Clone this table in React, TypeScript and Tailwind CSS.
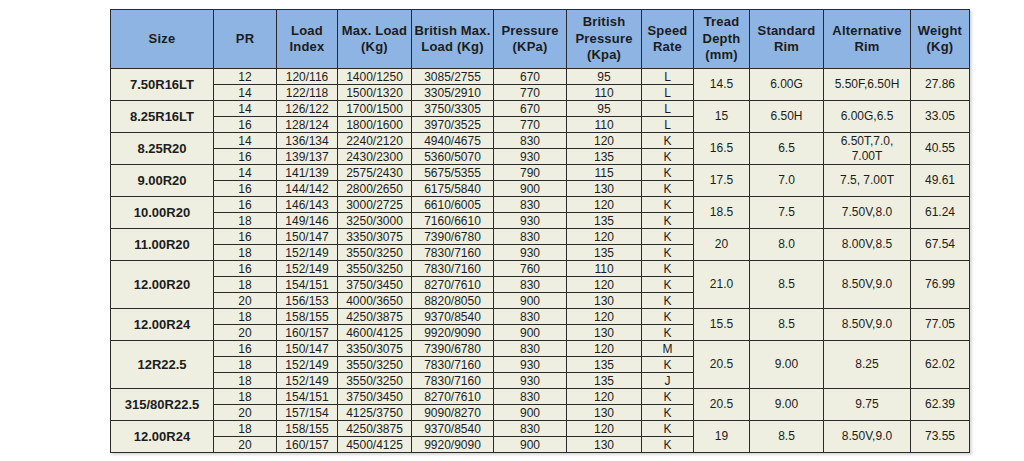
import React from "react";

type Row = [string, string, string, string, string, string, string];
type Group = { size: string; rows: Row[]; tread: string; std: string; alt: string; weight: string };

const groups: Group[] = [
  { size: "7.50R16LT", rows: [["12", "120/116", "1400/1250", "3085/2755", "670", "95", "L"], ["14", "122/118", "1500/1320", "3305/2910", "770", "110", "L"]], tread: "14.5", std: "6.00G", alt: "5.50F,6.50H", weight: "27.86" },
  { size: "8.25R16LT", rows: [["14", "126/122", "1700/1500", "3750/3305", "670", "95", "L"], ["16", "128/124", "1800/1600", "3970/3525", "770", "110", "L"]], tread: "15", std: "6.50H", alt: "6.00G,6.5", weight: "33.05" },
  { size: "8.25R20", rows: [["14", "136/134", "2240/2120", "4940/4675", "830", "120", "K"], ["16", "139/137", "2430/2300", "5360/5070", "930", "135", "K"]], tread: "16.5", std: "6.5", alt: "6.50T,7.0, 7.00T", weight: "40.55" },
  { size: "9.00R20", rows: [["14", "141/139", "2575/2430", "5675/5355", "790", "115", "K"], ["16", "144/142", "2800/2650", "6175/5840", "900", "130", "K"]], tread: "17.5", std: "7.0", alt: "7.5, 7.00T", weight: "49.61" },
  { size: "10.00R20", rows: [["16", "146/143", "3000/2725", "6610/6005", "830", "120", "K"], ["18", "149/146", "3250/3000", "7160/6610", "930", "135", "K"]], tread: "18.5", std: "7.5", alt: "7.50V,8.0", weight: "61.24" },
  { size: "11.00R20", rows: [["16", "150/147", "3350/3075", "7390/6780", "830", "120", "K"], ["18", "152/149", "3550/3250", "7830/7160", "930", "135", "K"]], tread: "20", std: "8.0", alt: "8.00V,8.5", weight: "67.54" },
  { size: "12.00R20", rows: [["16", "152/149", "3550/3250", "7830/7160", "760", "110", "K"], ["18", "154/151", "3750/3450", "8270/7610", "830", "120", "K"], ["20", "156/153", "4000/3650", "8820/8050", "900", "130", "K"]], tread: "21.0", std: "8.5", alt: "8.50V,9.0", weight: "76.99" },
  { size: "12.00R24", rows: [["18", "158/155", "4250/3875", "9370/8540", "830", "120", "K"], ["20", "160/157", "4600/4125", "9920/9090", "900", "130", "K"]], tread: "15.5", std: "8.5", alt: "8.50V,9.0", weight: "77.05" },
  { size: "12R22.5", rows: [["16", "150/147", "3350/3075", "7390/6780", "830", "120", "M"], ["18", "152/149", "3550/3250", "7830/7160", "930", "135", "K"], ["18", "152/149", "3550/3250", "7830/7160", "930", "135", "J"]], tread: "20.5", std: "9.00", alt: "8.25", weight: "62.02" },
  { size: "315/80R22.5", rows: [["18", "154/151", "3750/3450", "8270/7610", "830", "120", "K"], ["20", "157/154", "4125/3750", "9090/8270", "900", "130", "K"]], tread: "20.5", std: "9.00", alt: "9.75", weight: "62.39" },
  { size: "12.00R24", rows: [["18", "158/155", "4250/3875", "9370/8540", "830", "120", "K"], ["20", "160/157", "4500/4125", "9920/9090", "900", "130", "K"]], tread: "19", std: "8.5", alt: "8.50V,9.0", weight: "73.55" },
];

const widths = [103, 63, 61, 74, 82, 73, 75, 52, 56, 74, 87, 59];

const headers: React.ReactNode[] = [
  "Size",
  "PR",
  <>Load<br />Index</>,
  <>Max. Load<br />(Kg)</>,
  <>British Max.<br />Load (Kg)</>,
  <>Pressure<br />(KPa)</>,
  <>British<br />Pressure<br />(Kpa)</>,
  <>Speed<br />Rate</>,
  <>Tread<br />Depth<br />(mm)</>,
  <>Standard<br />Rim</>,
  <>Alternative<br />Rim</>,
  <>Weight<br />(Kg)</>,
];

const cell = "border border-[#2a2a2a] p-0 text-center align-middle";
const td = `${cell} h-[16px] text-[12px] leading-[14px]`;
const span = `${cell} text-[12px] leading-[15px] px-[6px]`;

export default function App() {
  return (
    <div className="min-h-[461px] w-[1024px] bg-white pl-[110px] pt-[9px]" style={{ fontFamily: '"Liberation Sans", Arial, sans-serif' }}>
      <table className="table-fixed border-collapse text-[#1c1c1c] bg-[#eeefe1] shadow-[2px_2px_2px_rgba(0,0,0,0.15)]" style={{ width: 859 }}>
        <colgroup>
          {widths.map((w, i) => (
            <col key={i} style={{ width: w }} />
          ))}
        </colgroup>
        <thead>
          <tr>
            {headers.map((h, i) => (
              <th key={i} className={`${cell} h-[59px] bg-[#8eb4e3] text-[13px] font-bold leading-[16.5px] tracking-[0.2px]`}>
                {h}
              </th>
            ))}
          </tr>
        </thead>
        <tbody>
          {groups.map((g, gi) =>
            g.rows.map((r, ri) => (
              <tr key={`${gi}-${ri}`}>
                {ri === 0 && (
                  <td rowSpan={g.rows.length} className={`${cell} text-[13px] font-bold leading-[15px]`}>
                    {g.size}
                  </td>
                )}
                {r.map((v, vi) => (
                  <td key={vi} className={td}>
                    {v}
                  </td>
                ))}
                {ri === 0 && (
                  <>
                    <td rowSpan={g.rows.length} className={span}>{g.tread}</td>
                    <td rowSpan={g.rows.length} className={span}>{g.std}</td>
                    <td rowSpan={g.rows.length} className={span}>{g.alt}</td>
                    <td rowSpan={g.rows.length} className={span}>{g.weight}</td>
                  </>
                )}
              </tr>
            ))
          )}
        </tbody>
      </table>
    </div>
  );
}
